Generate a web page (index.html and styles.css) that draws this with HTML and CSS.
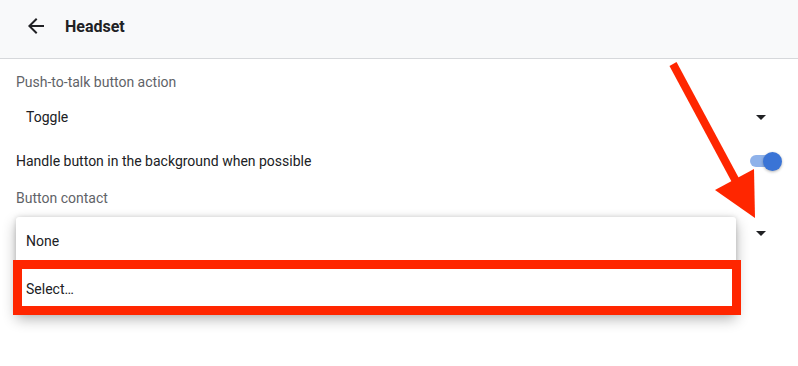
FILE: index.html
```html
<!DOCTYPE html>
<html>
<head>
<meta charset="utf-8">
<link rel="stylesheet" href="styles.css">
</head>
<body>
<header class="topbar">
  <svg class="back" viewBox="0 0 24 24" width="24" height="24"><path d="M20 11H7.83l5.59-5.59L12 4l-8 8 8 8 1.41-1.41L7.83 13H20v-2z" fill="#202124"/></svg>
  <h1 class="title">Headset</h1>
</header>
<main class="content">
  <div class="label first">Push-to-talk button action</div>
  <div class="select-row">
    <span>Toggle</span>
    <span class="caret"></span>
  </div>
  <div class="toggle-row">
    <span>Handle button in the background when possible</span>
    <span class="switch"><span class="track"></span><span class="knob"></span></span>
  </div>
  <div class="label second">Button contact</div>
  <div class="select-row">
    <span></span>
    <span class="caret"></span>
  </div>
</main>
<div class="menu">
  <div class="menu-item">None</div>
  <div class="menu-item">Select…</div>
</div>
<div class="highlight"></div>
<svg class="annot" width="798" height="366" viewBox="0 0 798 366">
  <line x1="673" y1="64" x2="738" y2="185" stroke="#ff2600" stroke-width="8"/>
  <polygon points="715,190 754,169 755,218" fill="#ff2600"/>
</svg>
</body>
</html>
```
FILE: styles.css
```css
* { box-sizing: border-box; }
html, body { margin: 0; padding: 0; }
body {
  width: 798px;
  height: 366px;
  overflow: hidden;
  background: #ffffff;
  font-family: Roboto, "Liberation Sans", sans-serif;
  color: #202124;
  font-size: 14px;
  position: relative;
}
.topbar {
  height: 59px;
  background: #f8f9fa;
  border-bottom: 1px solid #d6d8db;
  display: flex;
  align-items: center;
  padding: 0 0 6px 24px;
}
.back { display: block; }
.title {
  margin: 0 0 0 17px;
  font-size: 16px;
  font-weight: 700;
  color: #202124;
}
.content {
  padding: 0 16px;
}
.label {
  color: #5f6368;
  line-height: 20px;
  height: 20px;
}
.label.first { margin-top: 13px; }
.label.second { margin-top: 1px; }
.select-row {
  margin-top: 7px;
  height: 36px;
  display: flex;
  align-items: center;
  justify-content: space-between;
  padding: 0 16px 0 10px;
}
.caret {
  width: 0;
  height: 0;
  border-left: 5px solid transparent;
  border-right: 5px solid transparent;
  border-top: 5px solid #202124;
}
.toggle-row {
  height: 52px;
  display: flex;
  align-items: center;
  justify-content: space-between;
}
.switch {
  display: flex;
  align-items: center;
  width: 32px;
  height: 20px;
}
.track {
  width: 26px;
  height: 12px;
  border-radius: 6px;
  background: #8fb2ea;
}
.knob {
  width: 19px;
  height: 19px;
  border-radius: 50%;
  background: #3a74d6;
  margin-left: -13px;
  box-shadow: 0 1px 3px rgba(0,0,0,0.3);
}
.menu {
  position: absolute;
  left: 16px;
  top: 217px;
  width: 720px;
  background: #fff;
  border-radius: 3px;
  box-shadow: 0 6px 14px rgba(0,0,0,0.3), 0 0 5px rgba(0,0,0,0.14);
}
.menu-item {
  height: 48px;
  display: flex;
  align-items: center;
  padding-left: 10px;
  color: #202124;
}
.highlight {
  position: absolute;
  left: 13px;
  top: 260px;
  width: 728px;
  height: 55px;
  border: 9px solid #ff2600;
}
.annot {
  position: absolute;
  left: 0;
  top: 0;
  pointer-events: none;
}
```
